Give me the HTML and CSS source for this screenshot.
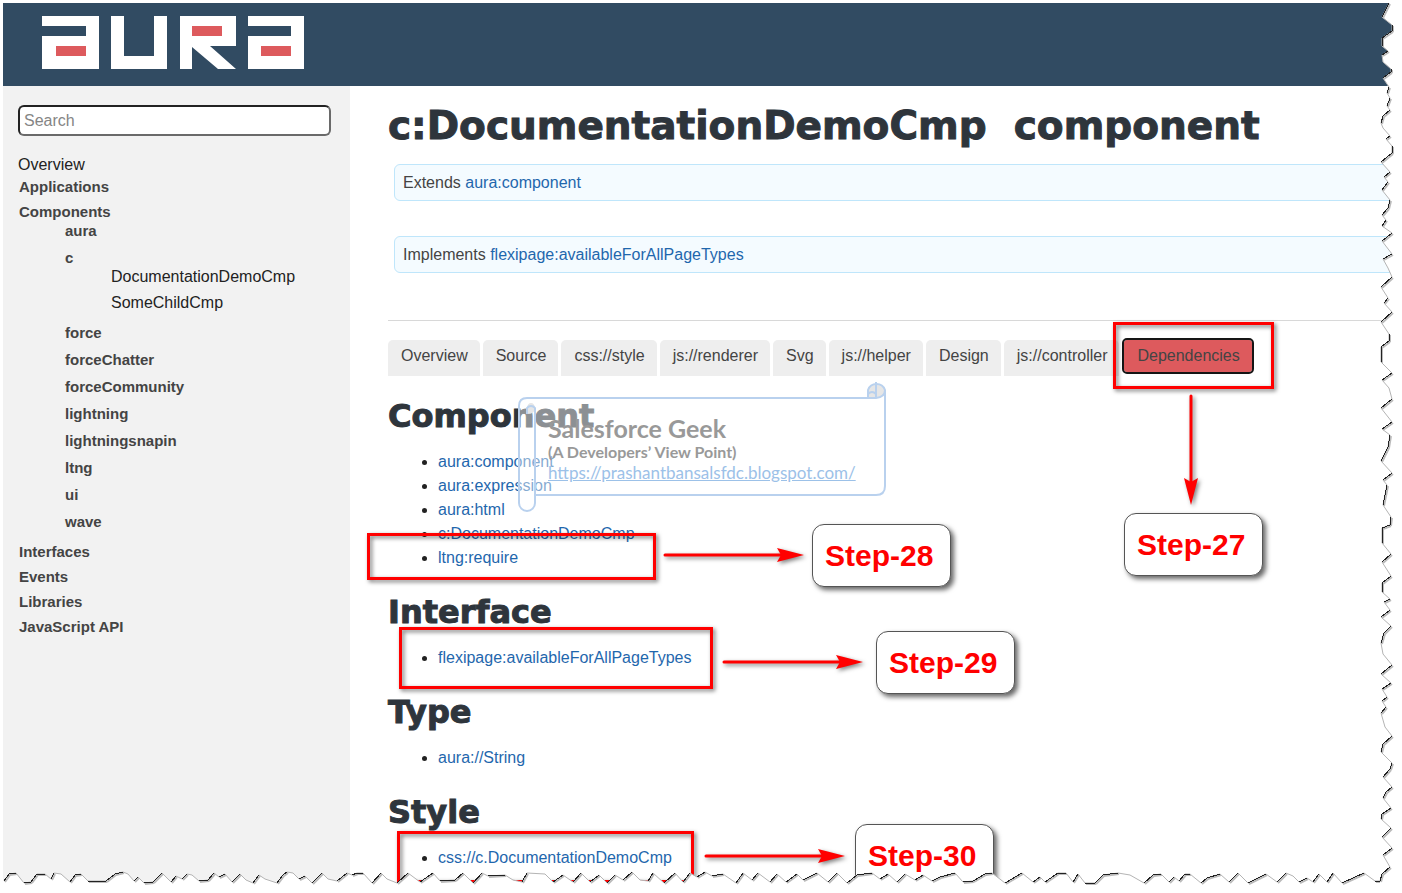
FILE: index.html
```html
<!DOCTYPE html>
<html lang="en">
<head>
<meta charset="utf-8">
<title>c:DocumentationDemoCmp component</title>
<link rel="stylesheet" href="styles.css">
</head>
<body>
<div class="page">
  <header class="top">
    <svg class="logo" viewBox="0 0 262 53" width="262" height="53" role="img" aria-label="aura">
      <g fill="#fff" fill-rule="evenodd">
        <path d="M0 0H57V53H0V20H44V10H0Z"/>
        <path d="M69 0H82V40H112V0H125V53H69Z"/>
        <path d="M138 0H194V30H168L194 53H176L150 31V53H138Z"/>
        <path d="M206 0H262V53H206V20H249V10H206Z"/>
      </g>
      <g fill="#dd5a5d">
        <path d="M14 30H44V40H14ZM150 10H180V20H150ZM219 30H249V40H219Z"/>
      </g>
    </svg>
  </header>
  <div class="columns">
    <nav class="side">
      <input class="search" type="text" placeholder="Search" aria-label="Search">
      <a class="plain" href="#">Overview</a>
      <ul class="tree">
        <li>Applications</li>
        <li>Components
          <ul class="names">
            <li>aura</li>
            <li>c
              <ul class="leaves">
                <li><a href="#">DocumentationDemoCmp</a></li>
                <li><a href="#">SomeChildCmp</a></li>
              </ul>
            </li>
            <li>force</li>
            <li>forceChatter</li>
            <li>forceCommunity</li>
            <li>lightning</li>
            <li>lightningsnapin</li>
            <li>ltng</li>
            <li>ui</li>
            <li>wave</li>
          </ul>
        </li>
        <li>Interfaces</li>
        <li>Events</li>
        <li>Libraries</li>
        <li>JavaScript API</li>
      </ul>
    </nav>
    <main class="main">
      <h1>c:DocumentationDemoCmp&nbsp; component</h1>
      <p class="info">Extends <a href="#">aura:component</a></p>
      <p class="info">Implements <a href="#">flexipage:availableForAllPageTypes</a></p>
      <div class="tabs">
        <button>Overview</button>
        <button>Source</button>
        <button>css://style</button>
        <button>js://renderer</button>
        <button>Svg</button>
        <button>js://helper</button>
        <button>Design</button>
        <button>js://controller</button>
        <button class="active">Dependencies</button>
      </div>
      <section>
        <h2>Component</h2>
        <ul>
          <li><a href="#">aura:component</a></li>
          <li><a href="#">aura:expression</a></li>
          <li><a href="#">aura:html</a></li>
          <li><a href="#">c:DocumentationDemoCmp</a></li>
          <li><a href="#">ltng:require</a></li>
        </ul>
      </section>
      <section>
        <h2>Interface</h2>
        <ul><li><a href="#">flexipage:availableForAllPageTypes</a></li></ul>
      </section>
      <section>
        <h2>Type</h2>
        <ul><li><a href="#">aura://String</a></li></ul>
      </section>
      <section>
        <h2>Style</h2>
        <ul><li><a href="#">css://c.DocumentationDemoCmp</a></li></ul>
      </section>
    </main>
  </div>

  <div class="mark">
    <svg class="scroll" viewBox="0 0 370 134" width="370" height="134" aria-hidden="true">
      <path d="M10 18H351V10A9 9 0 0 1 368 10V106Q368 115 359 115H18V123A8 8 0 0 1 2 123V26Q2 18 10 18Z" fill="#fff" fill-opacity=".45"/>
      <path d="M351 18V10A9 9 0 0 1 368 10Q368 17 359 18ZM10 34V28A4 5 0 0 1 18 28Q18 34 10 34Z" fill="#e6e6e6"/>
      <g fill="none" stroke="#b9d1ee" stroke-width="2">
        <path d="M18 115H359Q368 115 368 106V10A9 9 0 0 0 351 10V18H10Q2 18 2 26V123A8 8 0 0 0 18 123V28A5 5 0 0 0 10 28V34"/>
        <path d="M351 18H359V2M351 14Q355 10 359 14M359 18Q368 17 368 10"/>
      </g>
    </svg>
    <div class="words">
      <strong>Salesforce Geek</strong>
      <b>(A Developers’ View Point)</b>
      <a href="#">https://prashantbansalsfdc.blogspot.com/</a>
    </div>
  </div>

  <div class="frame frame-27"></div>
  <div class="frame frame-28"></div>
  <div class="frame frame-29"></div>
  <div class="frame frame-30"></div>

  <svg class="arrow arrow-27" viewBox="0 0 16 112" width="16" height="112"><path d="M8 3V90" /><polygon points="8,112 1,85 8,89 15,85"/></svg>
  <svg class="arrow arrow-28" viewBox="0 0 142 16" width="142" height="16"><path d="M3 8H120"/><polygon points="142,8 115,1 119,8 115,15"/></svg>
  <svg class="arrow arrow-29" viewBox="0 0 142 16" width="142" height="16"><path d="M3 8H120"/><polygon points="142,8 115,1 119,8 115,15"/></svg>
  <svg class="arrow arrow-30" viewBox="0 0 142 16" width="142" height="16"><path d="M3 8H120"/><polygon points="142,8 115,1 119,8 115,15"/></svg>

  <div class="step step-27">Step-27</div>
  <div class="step step-28">Step-28</div>
  <div class="step step-29">Step-29</div>
  <div class="step step-30">Step-30</div>

  <svg class="tear tear-bottom" viewBox="0 870 1402 23" width="1402" height="23" aria-hidden="true"></svg>
  <svg class="tear tear-right" viewBox="1378 0 24 893" width="24" height="893" aria-hidden="true"></svg>
</div>
<script src="tear.js"></script>
</body>
</html>
```
FILE: styles.css
```css
* { box-sizing: border-box; }
body {
  margin: 0;
  background: #fff;
  color: #444;
  font: 16px/24px "Liberation Sans", Arial, sans-serif;
}
ul { list-style: none; margin: 0; padding: 0; }
a { color: #1f67ad; text-decoration: none; }
.page {
  position: relative;
  display: flex;
  flex-direction: column;
  min-height: 100vh;
  padding: 3px 0 0 3px;
  overflow: hidden;
}
.top { height: 83px; padding: 13px 39px; background: #314b62; }
.logo { display: block; }
.columns { display: flex; flex: 1; }

.side { width: 347px; flex: none; padding: 19px 15px 24px; background: #f2f2f2; }
.search {
  display: block;
  width: 313px;
  height: 31px;
  margin-bottom: 20px;
  padding: 0 4px;
  border: 2px solid #6a6a6a;
  border-top-color: #222;
  border-left-color: #222;
  border-radius: 6px;
  background: #fff;
  font: inherit;
}
.search::placeholder { color: #858585; opacity: 1; }
.plain { display: block; line-height: 18px; color: #222; }
.tree { font-size: 15px; font-weight: bold; line-height: 25px; padding-left: 1px; }
.names { padding: 0 0 4px 46px; line-height: 27px; margin-top: -7px; }
.leaves { padding: 0 0 3px 46px; line-height: 26px; margin-top: -7px; font-size: 16px; font-weight: normal; }
.leaves a { color: #222; }

.main { flex: 1; min-width: 0; padding: 16px 0 23px 38px; }
h1, h2 {
  margin: 0 0 14px;
  color: #2e353c;
  font-family: "Arial Black", "DejaVu Sans", sans-serif;
  font-weight: 900;
  white-space: nowrap;
  -webkit-text-stroke: 1px #2e353c;
}
h1 { font-size: 39px; line-height: 48px; }
h2 { font-size: 32px; line-height: 40px; }
.info {
  height: 37px;
  margin: 0 0 35px 6px;
  padding: 6px 8px;
  border: 1px solid #bfe6fb;
  border-radius: 6px;
  background: #f4fbff;
}
.tabs { display: flex; gap: 3px; margin: 47px 0 20px; padding-top: 19px; border-top: 1px solid #d8d8d8; }
.tabs button {
  height: 36px;
  padding: 0 12px 4px 13px;
  border: 0;
  border-radius: 5px 5px 0 0;
  background: #eee;
  color: #444;
  font: inherit;
}
.tabs .active {
  height: 32px;
  padding-bottom: 0;
  margin-left: 2px;
  border-radius: 3px;
  background: #dd5a5d;
  outline: 2px solid #151515;
}
section + section { margin-top: 22px; }
section ul { list-style: disc; padding-left: 50px; }
section li::marker { color: #222; }

.mark { position: absolute; left: 517px; top: 380px; }
.scroll { display: block; }
.words { position: absolute; left: 31px; top: 34px; display: flex; flex-direction: column; color: #999; font-family: Lato, sans-serif; white-space: nowrap; }
.words strong { font-size: 25px; line-height: 28px; }
.words b { font-size: 16px; line-height: 20px; }
.words a { font-size: 17px; line-height: 22px; color: #9cc1e8; text-decoration: underline; }

.frame { position: absolute; border: 3px solid #f00; filter: drop-shadow(2px 2px 2px rgba(0, 0, 0, .55)); }
.frame-27 { left: 1113px; top: 322px; width: 161px; height: 67px; }
.frame-28 { left: 367px; top: 533px; width: 289px; height: 47px; }
.frame-29 { left: 399px; top: 627px; width: 314px; height: 62px; }
.frame-30 { left: 397px; top: 831px; width: 297px; height: 52px; }

.arrow { position: absolute; overflow: visible; fill: #f00; filter: drop-shadow(2px 2px 2px rgba(0, 0, 0, .5)); }
.arrow path { stroke: #f00; stroke-width: 3; stroke-linecap: round; }
.arrow-27 { left: 1183px; top: 393px; }
.arrow-28 { left: 662px; top: 547px; }
.arrow-29 { left: 721px; top: 654px; }
.arrow-30 { left: 703px; top: 848px; }

.step {
  position: absolute;
  padding: 0 12px;
  border: 1px solid #555;
  border-radius: 12px;
  background: #fff;
  box-shadow: 3px 3px 5px rgba(0, 0, 0, .6);
  color: #f00;
  font-size: 30px;
  font-weight: bold;
  line-height: 61px;
  width: 139px;
}
.step-27 { left: 1124px; top: 513px; }
.step-28 { left: 812px; top: 524px; }
.step-29 { left: 876px; top: 631px; }
.step-30 { left: 855px; top: 824px; }

.tear { position: absolute; }
.tear-bottom { left: 0; bottom: 0; }
.tear-right { right: 0; top: 0; }
.tear .paper { fill: #fff; }
.tear .light { fill: none; stroke: #b4b4b4; stroke-width: 1; }
.tear .shade { fill: none; stroke: #bbb; stroke-width: 2; }
.tear .dark { fill: none; stroke: #222; stroke-width: 1; shape-rendering: crispEdges; }
```
FILE: tear.js
```js
// Outline of the torn paper edges, as x,y pairs.
const right = "1389,3 1382,17 1392,25 1392,31 1382,38 1382,46 1388,51 1382,55 1383,62 1391,69 1391,72 1383,78 1389,87 1387,93 1390,98 1387,106 1390,110 1383,116 1381,123 1383,128 1390,136 1386,139 1392,146 1392,153 1381,162 1390,172 1384,177 1388,182 1382,190 1390,200 1388,208 1382,215 1386,220 1382,226 1392,233 1382,241 1392,254 1383,259 1388,268 1392,277 1381,287 1388,298 1384,303 1392,312 1381,322 1389,334 1389,341 1381,347 1381,362 1392,373 1382,380 1389,388 1392,399 1381,408 1392,422 1382,429 1390,435 1388,447 1381,461 1392,473 1383,480 1387,485 1383,505 1391,517 1390,525 1382,528 1382,543 1391,554 1382,562 1391,576 1382,583 1382,592 1390,599 1384,602 1390,610 1381,617 1391,626 1384,633 1381,643 1383,654 1392,665 1381,674 1391,683 1382,689 1387,697 1382,701 1386,707 1381,713 1385,727 1392,736 1383,744 1381,752 1392,763 1390,769 1383,777 1392,787 1386,792 1383,798 1391,808 1382,814 1381,819 1391,828 1382,837 1392,848 1383,855 1390,867 1382,874 1380,881";
const bottom = "4,881 9,874 16,873 24,883 31,882 37,874 45,874 51,879 54,873 61,874 70,882 75,875 81,874 88,881 106,881 115,874 123,872 128,874 134,881 138,877 144,883 153,882 162,873 171,882 176,876 182,879 187,874 192,875 199,881 208,880 214,873 219,877 225,874 232,882 240,874 246,880 253,883 259,875 265,879 277,883 283,875 287,872 293,873 299,879 305,876 312,883 322,873 328,879 337,881 347,873 352,875 357,873 363,873 372,883 381,873 387,879 397,883 408,873 420,882 433,873 440,881 455,880 463,873 473,883 482,873 488,876 505,875 513,880 522,882 527,873 545,874 553,882 563,875 573,882 581,873 590,882 599,875 607,883 615,875 623,880 632,872 640,880 648,881 653,873 664,883 675,873 683,882 690,873 697,877 705,872 712,876 723,874 736,883 743,873 752,880 758,873 770,882 777,874 786,882 797,874 803,880 817,873 828,882 837,873 847,883 857,875 872,873 880,879 888,874 897,882 905,874 915,880 923,875 932,881 940,877 955,873 963,882 973,881 985,874 992,873 1005,883 1022,873 1033,882 1040,877 1045,882 1058,873 1066,873 1073,882 1078,874 1085,883 1095,883 1103,875 1118,873 1130,875 1144,883 1153,875 1161,874 1169,882 1174,877 1179,881 1185,874 1190,874 1201,883 1207,878 1220,874 1229,882 1238,873 1248,883 1266,874 1277,882 1286,873 1293,876 1299,882 1307,878 1313,882 1319,874 1327,882 1333,873 1342,883 1364,873 1375,881 1381,881";

function draw(selector, text, close, isDark) {
  const svg = document.querySelector(selector);
  const pts = text.split(" ").map(p => p.split(",").map(Number));
  const line = "M" + pts.map(p => p.join(" ")).join("L");
  let dark = "";
  pts.slice(1).forEach((p, i) => {
    if (isDark(p[0] - pts[i][0], p[1] - pts[i][1])) dark += "M" + pts[i].join(" ") + "L" + p.join(" ");
  });
  const add = (cls, d, shift) => {
    const path = document.createElementNS("http://www.w3.org/2000/svg", "path");
    path.setAttribute("class", cls);
    path.setAttribute("d", d);
    if (shift) path.setAttribute("transform", "translate(1 1)");
    svg.append(path);
  };
  add("paper", line + close);
  add("shade", dark, true);
  add("light", line);
  add("dark", dark);
}
draw(".tear-bottom", bottom, "L1402 881V893H0V881Z", (dx, dy) => dy <= 0);
draw(".tear-right", right, "V893H1402V0H1389Z", (dx, dy) => dx <= 0);
```
